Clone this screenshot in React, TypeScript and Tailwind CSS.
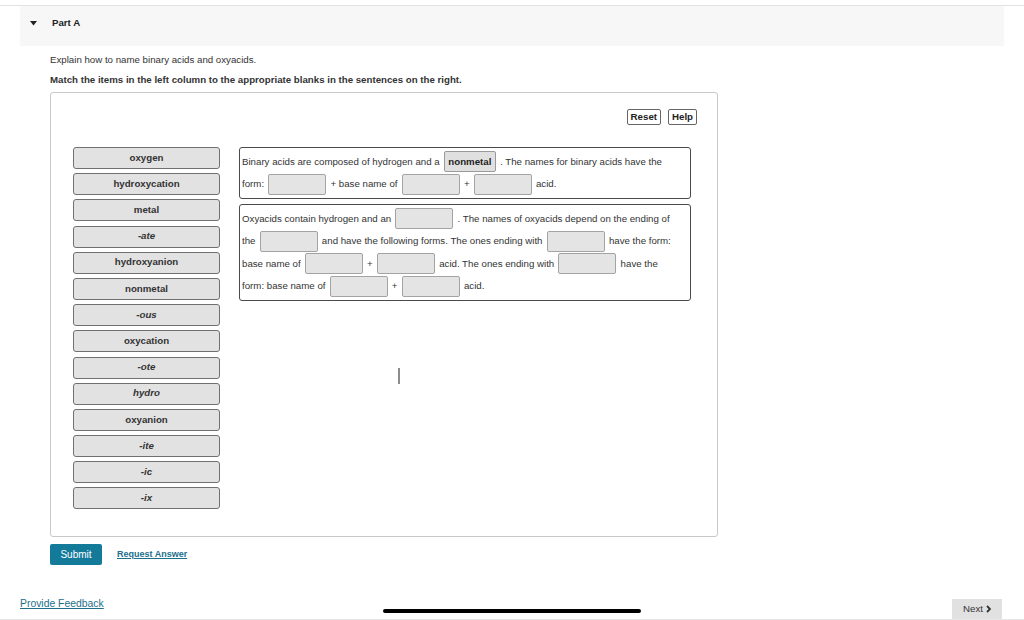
import React from "react";

type Item = { label: string; italic?: boolean };

const items: Item[] = [
  { label: "oxygen" },
  { label: "hydroxycation" },
  { label: "metal" },
  { label: "-ate", italic: true },
  { label: "hydroxyanion" },
  { label: "nonmetal" },
  { label: "-ous", italic: true },
  { label: "oxycation" },
  { label: "-ote", italic: true },
  { label: "hydro", italic: true },
  { label: "oxyanion" },
  { label: "-ite", italic: true },
  { label: "-ic", italic: true },
  { label: "-ix", italic: true },
];

function Blank() {
  return (
    <span className="mx-[1.5px] inline-block h-[21px] w-[58px] rounded-[2px] border border-[#a3a3a3] bg-[#e4e4e4] align-middle" />
  );
}

function Filled({ label }: { label: string }) {
  return (
    <span className="mx-[1.5px] inline-flex h-[21px] items-center rounded-[2px] border border-[#9a9a9a] bg-[#e0e0e0] px-[3.5px] align-middle font-bold text-[#222]">
      {label}
    </span>
  );
}

function Line({ children }: { children: React.ReactNode }) {
  return <div className="h-[22.5px] whitespace-nowrap leading-[22.5px]">{children}</div>;
}

function SentenceBox({ children }: { children: React.ReactNode }) {
  return (
    <div className="rounded-[3px] border border-[#4a4a4a] px-[2px] py-[2.5px] text-[9.7px] text-[#333]">
      {children}
    </div>
  );
}

export default function App() {
  return (
    <div className="relative flex h-[620px] w-[1024px] flex-col overflow-hidden bg-white pt-[5px] font-['Liberation_Sans',Arial,sans-serif] text-[#222]">
      <div className="border-t border-[#e2e2e2]" />

      {/* part header */}
      <div className="mx-[20px] flex h-[40px] items-center bg-[#f7f7f7] pb-[6px] pl-[10px]">
        <svg width="7" height="5" viewBox="0 0 7 5">
          <polygon points="0,0 7,0 3.5,4.5" fill="#222" />
        </svg>
        <span className="ml-[15px] text-[9.7px] font-bold">Part A</span>
      </div>

      <div className="pl-[50px]">
        <p className="mt-[8px] text-[9.7px] leading-[12px] text-[#333]">Explain how to name binary acids and oxyacids.</p>
        <p className="mt-[8px] text-[9.7px] font-bold leading-[12px] text-[#333]">
          Match the items in the left column to the appropriate blanks in the sentences on the right.
        </p>

        {/* activity box */}
        <div className="mt-[6px] flex h-[445px] w-[668px] flex-col rounded-[3px] border border-[#c9c9c9] pl-[22px] pr-[20px] pt-[16px]">
          <div className="flex justify-end gap-[7px]">
            <button className="h-[16px] rounded-[2px] border border-[#666] bg-white px-[3px] text-[9.7px] font-bold leading-none text-[#222]">
              Reset
            </button>
            <button className="h-[16px] rounded-[2px] border border-[#666] bg-white px-[3px] text-[9.7px] font-bold leading-none text-[#222]">
              Help
            </button>
          </div>

          <div className="mt-[22px] flex gap-[19px]">
            <div className="flex w-[147px] flex-col gap-[4.2px]">
              {items.map((it) => (
                <div
                  key={it.label}
                  className={
                    "flex h-[22px] items-center justify-center rounded-[3px] border border-[#707070] bg-[#e2e2e2] text-[9.7px] font-bold text-[#333] " +
                    (it.italic ? "italic" : "")
                  }
                >
                  {it.label}
                </div>
              ))}
            </div>

            <div className="flex w-[452px] flex-col gap-[5px]">
              <SentenceBox>
                <Line>
                  Binary acids are composed of hydrogen and a <Filled label="nonmetal" /> . The names for binary acids have the
                </Line>
                <Line>
                  form: <Blank /> + base name of <Blank /> + <Blank /> acid.
                </Line>
              </SentenceBox>
              <SentenceBox>
                <Line>
                  Oxyacids contain hydrogen and an <Blank /> . The names of oxyacids depend on the ending of
                </Line>
                <Line>
                  the <Blank /> and have the following forms. The ones ending with <Blank /> have the form:
                </Line>
                <Line>
                  base name of <Blank /> + <Blank /> acid. The ones ending with <Blank /> have the
                </Line>
                <Line>
                  form: base name of <Blank /> + <Blank /> acid.
                </Line>
              </SentenceBox>
            </div>
          </div>
        </div>

        <div className="mt-[7px] flex items-center gap-[15px]">
          <button className="h-[21px] w-[52px] rounded-[2px] bg-[#137a9a] text-[10px] text-white">Submit</button>
          <a className="text-[9px] font-bold text-[#1d6f8c] underline">Request Answer</a>
        </div>
      </div>

      {/* footer */}
      <div className="mt-auto flex items-start justify-between border-b border-[#e6e6e6] pl-[20px] pr-[22px]">
        <a className="mb-[9px] text-[10.4px] leading-[12px] text-[#1d6f8c] underline">Provide Feedback</a>
        <button className="mt-[1px] flex h-[20px] w-[50px] items-center justify-center gap-[3px] bg-[#e1e1e1] text-[9.7px] text-[#333]">
          Next
          <svg width="5" height="8" viewBox="0 0 5 8">
            <path d="M1 1 L4 4 L1 7" fill="none" stroke="#333" strokeWidth="1.8" />
          </svg>
        </button>
      </div>

      {/* text caret */}
      <div className="absolute left-[398px] top-[368px] h-[16px] w-[2px] bg-[#8c8c8c]" />
      {/* home indicator */}
      <div className="absolute left-[383px] top-[609px] h-[4px] w-[258px] rounded-full bg-black" />
    </div>
  );
}
